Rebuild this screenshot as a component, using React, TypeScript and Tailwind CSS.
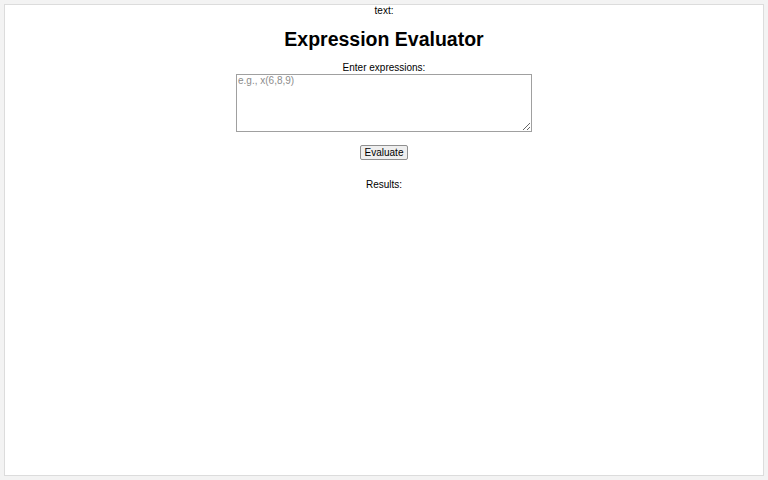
export default function App() {
  return (
    <div className="w-[768px] h-[480px] bg-[#f3f3f3] p-[4px] font-['Liberation_Sans',Arial,sans-serif] text-black">
      <div className="h-[472px] bg-white border border-[#dcdcdc] flex flex-col items-center">
        <div className="text-[10px] leading-[12px] mt-[0px]">text:</div>
        <h1 className="text-[19.5px] font-bold leading-[22px] mt-[11px]">Expression Evaluator</h1>
        <label className="text-[10px] leading-[12px] mt-[12px]">Enter expressions:</label>
        <textarea
          placeholder="e.g., x(6,8,9)"
          className="w-[296px] h-[58px] border border-[#a0a0a0] text-[10px] leading-[12px] px-[1px] py-[0px] placeholder:text-[#8c8c8c] resize-y"
        />
        <button className="mt-[13px] h-[15px] px-[4px] text-[10px] leading-[12px] bg-[#efefef] border border-[#8f8f8f] rounded-[2px]">
          Evaluate
        </button>
        <div className="text-[10px] leading-[12px] mt-[19px]">Results:</div>
      </div>
    </div>
  );
}
